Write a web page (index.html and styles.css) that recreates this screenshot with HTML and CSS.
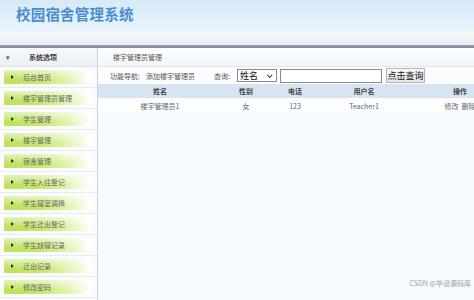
FILE: index.html
```html
<!DOCTYPE html>
<html lang="zh">
<head>
<meta charset="utf-8">
<title>校园宿舍管理系统</title>
<link rel="stylesheet" href="styles.css">
</head>
<body>
<div class="top">
  <div class="title">校园宿舍管理系统</div>
</div>
<div class="band"></div>
<div class="line"></div>
<div class="layout">
  <aside class="side">
    <div class="side-head"><span class="caret">▾</span><span class="side-title">系统选项</span></div>
    <ul class="menu">
      <li><span class="item"><span class="tri"></span>后台首页</span></li>
      <li><span class="item"><span class="tri"></span>楼宇管理员管理</span></li>
      <li><span class="item"><span class="tri"></span>学生管理</span></li>
      <li><span class="item"><span class="tri"></span>楼宇管理</span></li>
      <li><span class="item"><span class="tri"></span>宿舍管理</span></li>
      <li><span class="item"><span class="tri"></span>学生入住登记</span></li>
      <li><span class="item"><span class="tri"></span>学生寝室调换</span></li>
      <li><span class="item"><span class="tri"></span>学生迁出登记</span></li>
      <li><span class="item"><span class="tri"></span>学生缺寝记录</span></li>
      <li><span class="item"><span class="tri"></span>迁出记录</span></li>
      <li><span class="item"><span class="tri"></span>修改密码</span></li>
    </ul>
  </aside>
  <main class="main">
    <div class="crumb">楼宇管理员管理</div>
    <div class="toolbar">
      <span class="nav-label">功能导航:</span>
      <span class="nav-link">添加楼宇管理员</span>
      <span class="query-label">查询:</span>
      <span class="select">姓名<span class="chev"></span></span>
      <span class="input"></span>
      <span class="btn">点击查询</span>
    </div>
    <table class="grid">
      <colgroup>
        <col class="c1"><col class="c2"><col class="c3"><col class="c4"><col class="c5">
      </colgroup>
      <thead>
        <tr><th>姓名</th><th>性别</th><th>电话</th><th>用户名</th><th>操作</th></tr>
      </thead>
      <tbody>
        <tr><td>楼宇管理员1</td><td>女</td><td>123</td><td>Teacher1</td><td>修改&nbsp;&nbsp;删除</td></tr>
      </tbody>
    </table>
    <div class="mark">CSDN @毕设源码库</div>
  </main>
</div>
</body>
</html>
```
FILE: styles.css
```css
* { box-sizing: border-box; }
html, body {
  margin: 0;
  padding: 0;
  width: 474px;
  height: 300px;
  overflow: hidden;
  font-family: "Noto Sans CJK SC", "DejaVu Sans", sans-serif;
  font-size: 7px;
  color: #555;
  background: #f7fafd;
}
.top {
  height: 32px;
  background: linear-gradient(to bottom, #d6eaf8, #e9f4fc);
  padding: 5px 0 0 16px;
}
.title {
  font-size: 14.5px;
  line-height: 18px;
  font-weight: bold;
  color: #4a8bcf;
  letter-spacing: 0.2px;
}
.band {
  height: 13px;
  background: linear-gradient(to bottom, #f6f9fb, #e7edf2);
}
.line {
  height: 3px;
  background: linear-gradient(to bottom, #9aa6b4, #7c8898);
}
.layout {
  display: flex;
  height: 252px;
}
.side {
  width: 98px;
  flex: none;
  border-right: 1px solid #c9d2dc;
  background: #fbfcfd;
}
.side-head {
  height: 19px;
  display: flex;
  align-items: center;
  border-bottom: 1px solid #dde3e9;
  background: linear-gradient(to bottom, #f6f9fc, #eaf0f5);
  padding-left: 6px;
}
.caret {
  font-size: 7px;
  color: #555;
  width: 23px;
}
.side-title {
  color: #444;
  font-weight: bold;
}
.menu {
  list-style: none;
  margin: 0;
  padding: 0;
}
.menu li {
  height: 21px;
  padding: 3px 6px 3px 4px;
  border-bottom: 1px solid #e8ecef;
}
.item {
  display: flex;
  align-items: center;
  height: 14px;
  padding-left: 7px;
  color: #6a6a6a;
  background:
    linear-gradient(to bottom, rgba(255,255,255,0.6), rgba(255,255,255,0) 70%),
    linear-gradient(to right, #bde25a 0%, #c4e66a 40%, #e0f3ac 72%, #ffffff 100%);
}
.tri {
  width: 0;
  height: 0;
  border-left: 3px solid #333;
  border-top: 2.5px solid transparent;
  border-bottom: 2.5px solid transparent;
  margin-right: 9px;
}
.main {
  flex: 1;
  min-width: 0;
  position: relative;
  overflow: hidden;
  background: #f6f9fd;
}
.crumb {
  height: 19px;
  line-height: 18px;
  padding-left: 15px;
  background: linear-gradient(to bottom, #fbfdfe, #f2f6fa);
  border-bottom: 1px solid #e1e7ed;
  color: #555;
}
.toolbar {
  height: 17px;
  display: flex;
  align-items: center;
  padding-left: 12px;
  background: #fafcfe;
}
.nav-label { margin-right: 6px; }
.nav-link { margin-right: 19px; }
.query-label { margin-right: 7px; }
.select {
  width: 40px;
  height: 13px;
  border: 1px solid #8a8a8a;
  background: #fff;
  font-size: 9px;
  color: #111;
  display: flex;
  align-items: center;
  padding-left: 2px;
  justify-content: space-between;
  padding-right: 5px;
  margin-right: 3px;
}
.chev {
  width: 4px;
  height: 4px;
  border-right: 1px solid #333;
  border-bottom: 1px solid #333;
  transform: rotate(45deg) translateY(-1px);
}
.input {
  width: 102px;
  height: 14px;
  border: 1px solid #8a8a8a;
  background: #fff;
  margin-right: 4px;
}
.btn {
  width: 39px;
  height: 15px;
  border: 1px solid #b5b5b5;
  background: linear-gradient(to bottom, #f8f8f8, #e6e6e6);
  font-size: 9px;
  color: #111;
  display: flex;
  align-items: center;
  justify-content: center;
}
.grid {
  border-collapse: collapse;
  table-layout: fixed;
  width: 414px;
}
.c1 { width: 124px; }
.c2 { width: 48px; }
.c3 { width: 50px; }
.c4 { width: 88px; }
.c5 { width: 104px; }
.grid th {
  height: 14px;
  padding: 0;
  background: #d7e5f3;
  font-weight: bold;
  color: #444;
  text-align: center;
}
.grid td {
  height: 15px;
  padding: 0;
  text-align: center;
  color: #666;
  white-space: nowrap;
  background: #fbfdfe;
}
.mark {
  position: absolute;
  right: 3px;
  bottom: 12px;
  color: #9aa0a6;
  font-size: 7px;
}
```
